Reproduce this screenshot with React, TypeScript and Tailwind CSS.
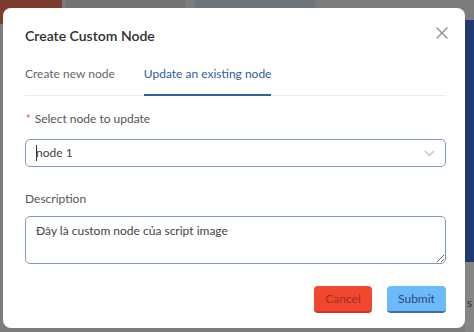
import React from "react";

export default function App() {
  const font = { fontFamily: "Lato, 'Noto Sans', sans-serif" };
  return (
    <div className="relative w-[474px] h-[332px] overflow-hidden bg-[#7c7c7c]" style={font}>
      {/* dimmed page behind the overlay */}
      <div className="absolute left-0 top-0 w-[62px] h-[24px] bg-[#7e3c30]" />
      <div className="absolute left-[66px] top-0 w-[120px] h-[8px] bg-[#737373]" />
      <div className="absolute left-[195px] top-0 w-[120px] h-[8px] bg-[#6e7478]" />
      <div className="absolute left-[465px] top-[20px] w-[9px] h-[242px] bg-[#1f3a6f]" />
      <div className="absolute left-[465px] top-[262px] w-[9px] h-[70px] bg-[#858585]">
        <span className="absolute left-[2px] top-[32px] text-[12px] text-[#333]">s</span>
      </div>

      {/* modal */}
      <div className="relative ml-[3px] mt-[8px] w-[462px] h-[320px] rounded-[8px] bg-white pl-[22px] pr-[19px] pt-[18px]">
        <div className="flex items-center justify-between">
          <h2 className="text-[14px] leading-[20px] font-semibold text-[#2e2e2e]">Create Custom Node</h2>
          <svg width="12" height="12" viewBox="0 0 12 12" className="mr-[-2px] mt-[-6px]">
            <path d="M1 1L11 11M11 1L1 11" stroke="#8a8a8a" strokeWidth="1.3" strokeLinecap="round" />
          </svg>
        </div>

        <div className="mt-[12px] flex gap-[29px] border-b border-[#ececec]">
          <div className="pt-[6px] pb-[10px] leading-[20px] text-[12px] text-[#666] border-b-2 border-transparent -mb-px">
            Create new node
          </div>
          <div className="pt-[6px] pb-[10px] leading-[20px] text-[12px] text-[#2f5c9f] border-b-2 border-[#2f5fa6] -mb-px">
            Update an existing node
          </div>
        </div>

        <div className="mt-[13px] leading-[20px] text-[12px] text-[#555] flex items-center">
          <span className="text-[#e0504a] text-[11px] mr-[4px] ml-[1px]">*</span>
          Select node to update
        </div>

        <div className="mt-[10px] h-[28px] rounded-[5px] border border-[#7d98b9] flex items-center pl-[10px] pr-[10px] justify-between">
          <div className="flex items-center text-[12px] text-[#444]">
            <span className="w-px h-[16px] bg-[#333] mr-[-1px]" />
            <span>node 1</span>
          </div>
          <svg width="11" height="7" viewBox="0 0 11 7">
            <path d="M1 1L5.5 5.5L10 1" fill="none" stroke="#bdbdbd" strokeWidth="1.1" />
          </svg>
        </div>

        <div className="mt-[22px] leading-[20px] text-[12px] text-[#555]">Description</div>

        <textarea
          className="mt-[7px] block w-full h-[48px] rounded-[5px] border border-[#7d98b9] px-[10px] py-[5px] text-[12px] leading-[18px] text-[#444] outline-none"
          style={font}
          defaultValue="Đây là custom node của script image"
        />

        <div className="mt-[22px] flex justify-end gap-[15px]">
          <button className="w-[58px] h-[27px] rounded-[4px] bg-[#f2472f] border-b-2 border-[#c9391f] text-[12px] text-[#a12d1e]">
            Cancel
          </button>
          <button className="w-[59px] h-[27px] rounded-[4px] bg-[#6bbafa] border-b-2 border-[#3b6fa5] text-[12px] text-[#284b7e]">
            Submit
          </button>
        </div>
      </div>
    </div>
  );
}
